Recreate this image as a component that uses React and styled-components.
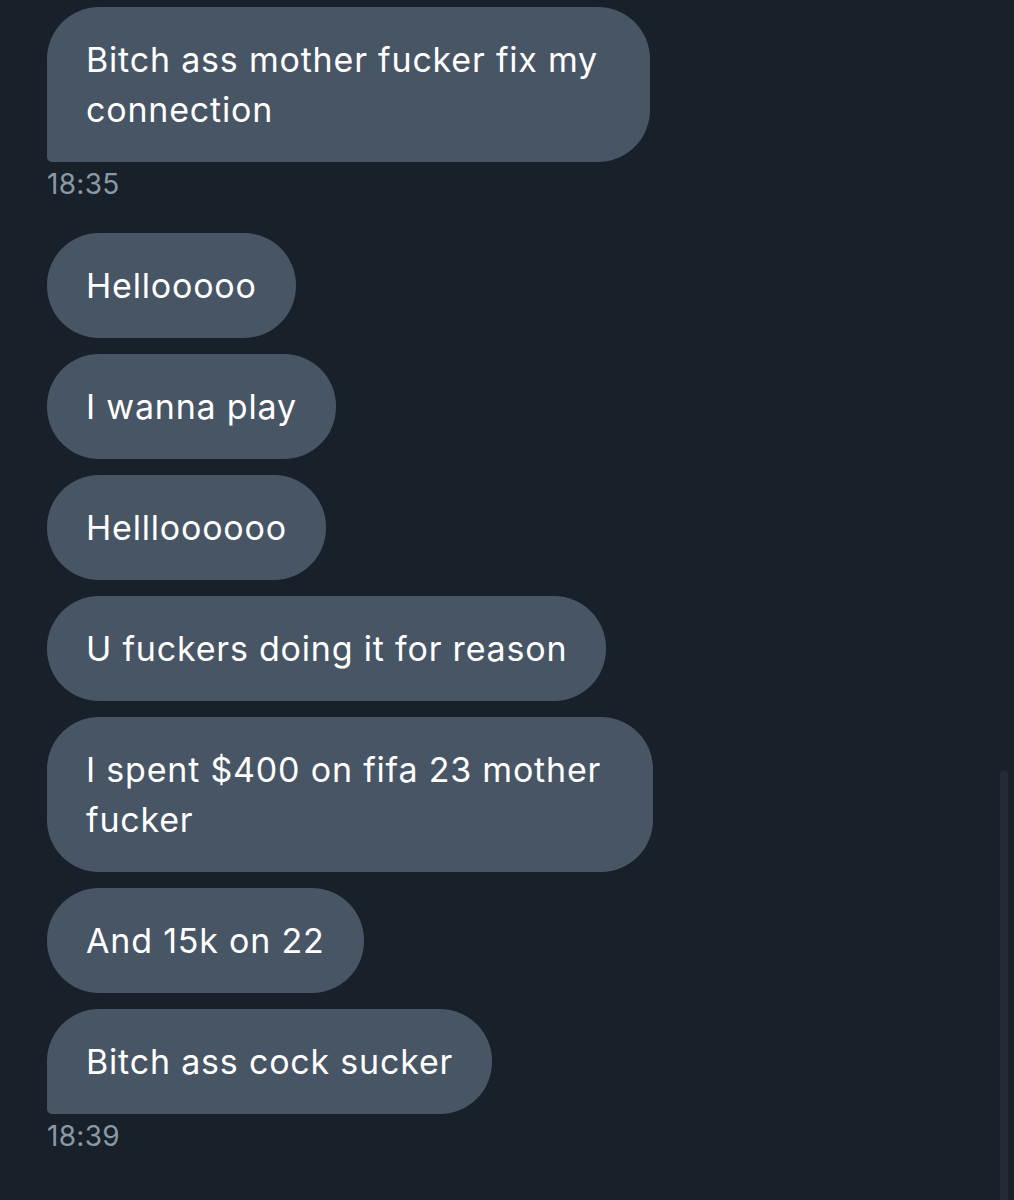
import React from 'react';
import styled, { createGlobalStyle } from 'styled-components';

const BG = '#18202a';
const BUBBLE = '#475565';
const MUTED = '#8b98a5';

const GlobalStyle = createGlobalStyle`
  html, body {
    margin: 0;
    padding: 0;
    background: ${BG};
  }
  body {
    font-family: Inter, "Noto Sans", "Liberation Sans", sans-serif;
    -webkit-font-smoothing: antialiased;
  }
`;

const Thread = styled.div`
  position: relative;
  height: 1200px;
  overflow: hidden;
  background: ${BG};
  padding: 7px 0 0 47px;
  box-sizing: border-box;
  display: flex;
  flex-direction: column;
  gap: 33px;
`;

const Group = styled.div`
  display: flex;
  flex-direction: column;
  align-items: flex-start;
  gap: 16px;
`;

const Bubble = styled.div`
  background: ${BUBBLE};
  color: #ffffff;
  font-size: 34px;
  line-height: 50px;
  letter-spacing: 0.8px;
  padding: 27.5px ${p => (p.$wrapped ? 52 : 39)}px 27.5px 39px;
  border-radius: 52px;
  border-bottom-left-radius: ${p => (p.$last ? '5px' : '52px')};
  white-space: nowrap;
`;

const Time = styled.div`
  color: ${MUTED};
  font-size: 28px;
  line-height: 32px;
  letter-spacing: 0.3px;
  margin-top: -10px;
`;

// 오른쪽 스크롤바 (내용 위에 겹침)
const ScrollThumb = styled.div`
  position: absolute;
  right: 6px;
  top: 770px;
  bottom: 0;
  width: 8px;
  border-radius: 4px 4px 0 0;
  background: #232b36;
`;

const groups = [
  {
    time: '18:35',
    messages: [['Bitch ass mother fucker fix my', 'connection']],
  },
  {
    time: '18:39',
    messages: [
      ['Hellooooo'],
      ['I wanna play'],
      ['Hellloooooo'],
      ['U fuckers doing it for reason'],
      ['I spent $400 on fifa 23 mother', 'fucker'],
      ['And 15k on 22'],
      ['Bitch ass cock sucker'],
    ],
  },
];

export default function App() {
  return (
    <>
      <GlobalStyle />
      <Thread>
        {groups.map(g => (
          <Group key={g.time}>
            {g.messages.map((lines, i) => (
              <Bubble
                key={i}
                $wrapped={lines.length > 1}
                $last={i === g.messages.length - 1}
              >
                {lines.map((l, j) => (
                  <React.Fragment key={j}>
                    {j > 0 && <br />}
                    {l}
                  </React.Fragment>
                ))}
              </Bubble>
            ))}
            <Time>{g.time}</Time>
          </Group>
        ))}
        <ScrollThumb />
      </Thread>
    </>
  );
}
